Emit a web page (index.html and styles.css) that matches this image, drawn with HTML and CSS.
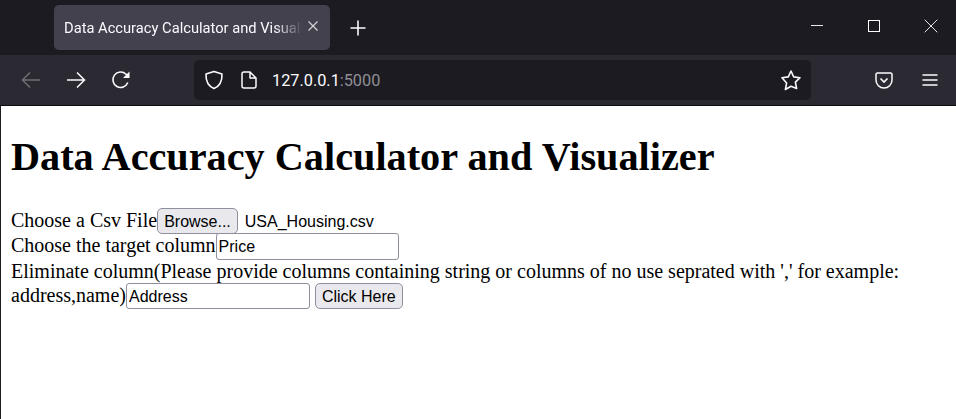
FILE: index.html
```html
<!DOCTYPE html>
<html lang="en">
<head>
    <meta charset="UTF-8">
    <title>Data Accuracy Calculator and Visualizer</title>
    <link rel="stylesheet" href="styles.css">
</head>
<body>
    <div class="browser-top">
        <!-- Tab strip -->
        <div class="tabstrip">
            <div class="tab">
                <span class="tab-title">Data Accuracy Calculator and Visualizer</span>
                <svg class="tab-close" width="12" height="12" viewBox="0 0 12 12"><path d="M1.500 1.500l9 9M10.500 1.500l-9 9" stroke="#d4d4d8" stroke-width="1.200" fill="none"/></svg>
            </div>
            <svg class="new-tab" width="16" height="16" viewBox="0 0 16 16"><path d="M8 .5v15M.5 8h15" stroke="#fbfbfe" stroke-width="1.600" fill="none"/></svg>
            <div class="window-controls">
                <svg width="14" height="14" viewBox="0 0 14 14"><path d="M1 6.500h12" stroke="#e6e6e8" stroke-width="1" fill="none"/></svg>
                <svg width="14" height="14" viewBox="0 0 14 14"><rect x="1.500" y="1.500" width="11" height="11" stroke="#fff" stroke-width="1" fill="none"/></svg>
                <svg width="14" height="14" viewBox="0 0 14 14"><path d="M.7.7l12.600 12.600M13.300.7L.7 13.300" stroke="#e6e6e8" stroke-width="1" fill="none"/></svg>
            </div>
        </div>
        <!-- Toolbar -->
        <div class="toolbar">
            <svg class="nav-btn" width="20" height="20" viewBox="0 0 20 20"><path d="M19 10H1.500M9 2.500L1.500 10 9 17.500" stroke="#6f6f76" stroke-width="1.500" fill="none"/></svg>
            <svg class="nav-btn" width="20" height="20" viewBox="0 0 20 20"><path d="M1 10h17.500M11 2.500L18.500 10 11 17.500" stroke="#fbfbfe" stroke-width="1.500" fill="none"/></svg>
            <svg class="nav-btn" width="20" height="20" viewBox="0 0 20 20"><path d="M16.800 12.500A7.700 7.700 0 1 1 15 4.200L18 7" stroke="#fbfbfe" stroke-width="1.600" fill="none"/><path d="M18.500 1.500v6.500H12z" fill="#fbfbfe"/></svg>
            <div class="urlbar">
                <svg width="20" height="20" viewBox="0 0 20 20"><path d="M10 1.500l8 2.500c.300 7-2 12-8 14.500C4 16 1.700 11 2 4z" stroke="#fbfbfe" stroke-width="1.600" fill="none" stroke-linejoin="round"/></svg>
                <svg width="16" height="18" viewBox="0 0 16 18"><path d="M1 3a2 2 0 0 1 2-2h6l6 6v8a2 2 0 0 1-2 2H3a2 2 0 0 1-2-2zM9 1v6h6" stroke="#fbfbfe" stroke-width="1.500" fill="none" stroke-linejoin="round"/></svg>
                <span class="url">127.0.0.1<span class="url-port">:5000</span></span>
                <svg class="star" width="22" height="22" viewBox="0 0 22 22"><path d="M11 2l2.700 5.900 6.300.800-4.600 4.400 1.200 6.400L11 17.300l-5.600 3.200 1.200-6.400L2 8.700l6.300-.800z" stroke="#fbfbfe" stroke-width="1.600" fill="none" stroke-linejoin="round"/></svg>
            </div>
            <div class="toolbar-right">
                <svg width="18" height="17" viewBox="0 0 18 17"><path d="M2.500 1h13A1.500 1.500 0 0 1 17 2.500V8a8 8 0 0 1-16 0V2.500A1.500 1.500 0 0 1 2.500 1z" stroke="#fbfbfe" stroke-width="1.500" fill="none"/><path d="M5.500 6.500L9 10l3.500-3.500" stroke="#fbfbfe" stroke-width="1.600" fill="none"/></svg>
                <svg width="16" height="14" viewBox="0 0 16 14"><path d="M.500 2h15M.500 7h15M.500 12h15" stroke="#fbfbfe" stroke-width="1.500" fill="none"/></svg>
            </div>
        </div>
    </div>

    <div class="page">
        <h1>Data Accuracy Calculator and Visualizer</h1>
        <form class="upload-form">
            <div class="line-first">Choose a Csv File<button type="button" class="btn">Browse...</button><span class="file-name">USA_Housing.csv</span></div>
            <div class="line-target">Choose the target column<input type="text" class="text-input" value="Price"></div>
            <div>Eliminate column(Please provide columns containing string or columns of no use seprated with ',' for example: address,name)<input type="text" class="text-input address" value="Address">
            <button type="button" class="btn">Click Here</button></div>
        </form>
    </div>
</body>
</html>
```

FILE: styles.css
```css
html, body {
    height: 100%;
}
body {
    margin: 0;
    background-color: #fff;
    display: flex;
    flex-direction: column;
    overflow: hidden;
}
.browser-top {
    flex: none;
    background-color: #1c1b22;
    border-bottom: 1px solid #0c0c0d;
}
.tabstrip {
    height: 55px;
    display: flex;
    align-items: center;
    padding-left: 54px;
    box-sizing: border-box;
    padding-top: 5px;
    padding-bottom: 5px;
}
.tab {
    width: 276px;
    height: 45px;
    box-sizing: border-box;
    padding: 0 11px 0 10px;
    background-color: #42414d;
    border-radius: 5px;
    display: flex;
    align-items: center;
}
.tab-title {
    flex: 1;
    overflow: hidden;
    white-space: nowrap;
    padding-top: 1px;
    font-family: Roboto, "Liberation Sans", sans-serif;
    font-size: 14.700px;
    color: #fbfbfe;
    -webkit-mask-image: linear-gradient(to right, #000 88%, transparent);
    mask-image: linear-gradient(to right, #000 88%, transparent);
}
.tab-close {
    flex: none;
    margin-left: 4px;
    margin-top: -3px;
}
.new-tab {
    margin-left: 20px;
}
.window-controls {
    margin-left: auto;
    display: flex;
    align-items: center;
    gap: 43px;
    padding-right: 18px;
    margin-top: -3px;
}
.toolbar {
    height: 50px;
    background-color: #2b2a33;
    display: flex;
    align-items: center;
    padding-left: 21px;
}
.nav-btn {
    margin-right: 25px;
}
.urlbar {
    margin-left: 38px;
    width: 617px;
    height: 40px;
    box-sizing: border-box;
    background-color: #1c1b22;
    border-radius: 5px;
    display: flex;
    align-items: center;
    gap: 17px;
    padding: 0 9px 0 10px;
}
.url {
    font-family: Roboto, "Liberation Sans", sans-serif;
    font-size: 16.300px;
    color: #fbfbfe;
    margin-left: -2px;
}
.url-port {
    color: #8f8f94;
}
.star {
    margin-left: auto;
}
.toolbar-right {
    display: flex;
    align-items: center;
    gap: 29px;
    margin-left: 64px;
}
.page {
    flex: 1;
    border-left: 1px solid #1c1b22;
    padding: 0 10px;
    font-family: "Liberation Serif", serif;
    font-size: 20px;
    line-height: 23px;
    color: #000;
}
h1 {
    font-size: 40.250px;
    line-height: 46px;
    margin: 28px 0 28px 0;
}
.upload-form {
    margin: 0;
}
.file-name {
    font-family: "Liberation Sans", sans-serif;
    font-size: 16px;
    margin-left: 7px;
}
.btn {
    font-family: "Liberation Sans", sans-serif;
    font-size: 16px;
    height: 26px;
    padding: 2px 6px 0;
    background-color: #e9e9ed;
    border: 1px solid #8f8f9d;
    border-radius: 5px;
    color: #000;
}
.text-input {
    font-family: "Liberation Sans", sans-serif;
    font-size: 16px;
    width: 184px;
    height: 26px;
    box-sizing: border-box;
    padding: 0 2px;
    border: 1px solid #8f8f9d;
    border-radius: 3px;
    color: #000;
}
.line-target {
    margin-top: -1px;
}
.line-target .text-input {
    height: 27px;
    width: 183px;
}
.address {
    padding-top: 2px;
    margin-top: -1px;
}
```
